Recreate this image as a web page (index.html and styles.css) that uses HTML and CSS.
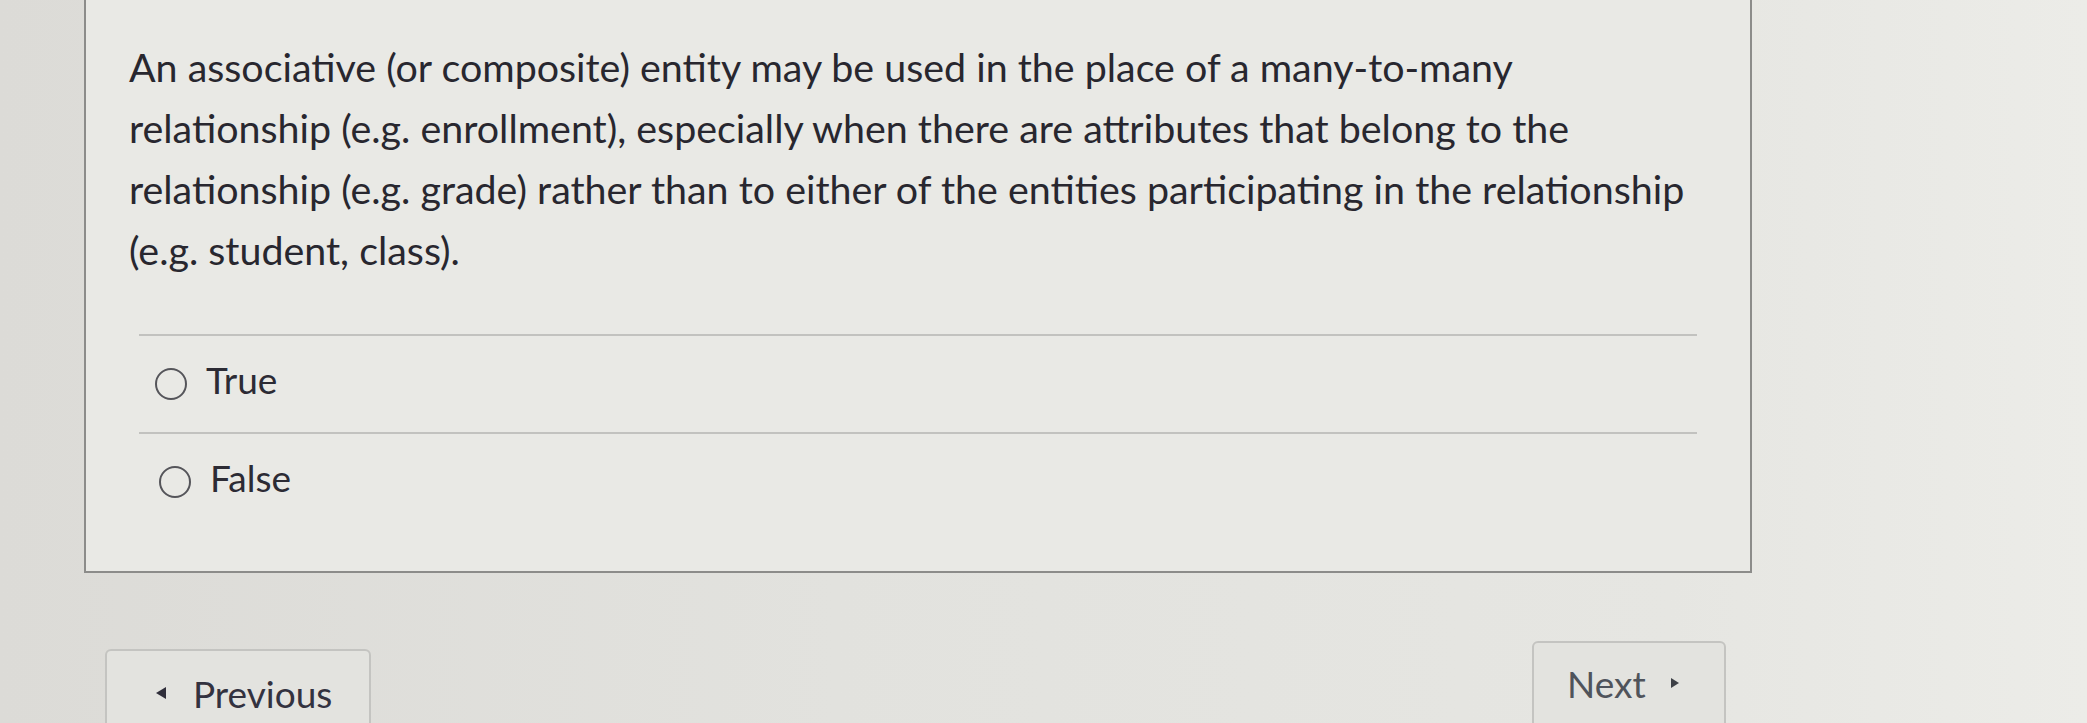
FILE: index.html
```html
<!DOCTYPE html>
<html lang="en">
<head>
<meta charset="utf-8">
<title>Question</title>
<link rel="stylesheet" href="styles.css">
</head>
<body>
<main class="page">
  <section class="question-card">
    <p class="question-text">An associative (or composite) entity may be used in the place of a many-to-many relationship (e.g. enrollment), especially when there are attributes that belong to the relationship (e.g. grade) rather than to either of the entities participating in the relationship (e.g. student, class).</p>
    <ul class="answers">
      <li class="answer"><span class="radio"></span><span class="answer-label">True</span></li>
      <li class="answer answer-false"><span class="radio"></span><span class="answer-label">False</span></li>
    </ul>
  </section>
  <nav class="pager">
    <button class="pager-btn pager-prev" type="button">
      <svg class="caret" width="12" height="14" viewBox="0 0 12 14"><path d="M1 7 L11 1 L11 13 Z" fill="#2f2e3a"/></svg>
      <span>Previous</span>
    </button>
    <button class="pager-btn pager-next" type="button">
      <span>Next</span>
      <svg class="caret" width="10" height="12" viewBox="0 0 10 12"><path d="M9 6 L1 1 L1 11 Z" fill="#3d4046"/></svg>
    </button>
  </nav>
</main>
</body>
</html>
```

FILE: styles.css
```css
html, body {
  margin: 0;
  padding: 0;
}

*, *::before, *::after {
  box-sizing: border-box;
}

body {
  background: linear-gradient(90deg, #dcdbd7 0%, #e2e2de 40%, #e6e6e2 80%, #ececE8 100%);
  font-family: Lato, "Open Sans", "Liberation Sans", sans-serif;
  color: #28272f;
  height: 723px;
  overflow: hidden;
}

.page {
  width: 2087px;
}

.question-card {
  margin-left: 84px;
  width: 1668px;
  background: #e9e9e5;
  border: 2px solid #8c8c8a;
  border-top: none;
  padding: 36px 53px 41px 43px;
}

.question-text {
  margin: 0;
  font-size: 39.4px;
  line-height: 61px;
  color: #28272f;
}

.answers {
  list-style: none;
  margin: 54px 0 0 10px;
  padding: 0;
}

.answer {
  display: flex;
  align-items: center;
  height: 98px;
  border-top: 2px solid #c2c2bf;
}

.answer-false {
  padding-left: 4px;
}

.radio {
  width: 32px;
  height: 32px;
  margin-left: 16px;
  border: 2px solid #55555a;
  border-radius: 50%;
  background: transparent;
  flex: none;
}

.answer-label {
  margin-left: 19px;
  font-size: 37px;
  padding-bottom: 10px;
  color: #2c2b34;
}

.pager {
  display: flex;
  justify-content: space-between;
  align-items: flex-start;
  margin-left: 105px;
  width: 1621px;
  margin-top: 68px;
}

.pager-btn {
  display: flex;
  font-family: Lato, "Open Sans", "Liberation Sans", sans-serif;
  font-size: 37px;
  line-height: 43px;
  background: #e3e3df;
  border: 2px solid #c4c4c1;
  border-radius: 6px;
  height: 110px;
  align-items: flex-start;
  cursor: pointer;
}

.pager-prev {
  margin-top: 8px;
  width: 266px;
  padding: 21px 0 0 48px;
  color: #33323f;
}

.pager-prev .caret {
  margin-top: 14px;
  margin-right: 26px;
}

.pager-next {
  width: 194px;
  padding: 19px 0 0 33px;
  color: #50545b;
}

.pager-next .caret {
  margin-top: 15px;
  margin-left: 24px;
}
```
